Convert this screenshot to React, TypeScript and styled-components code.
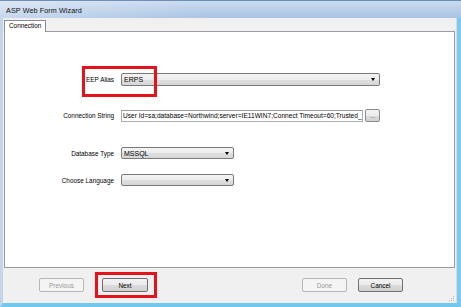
import * as React from 'react'
import styled, { createGlobalStyle } from 'styled-components'

const GlobalStyle = createGlobalStyle`
  html, body {
    margin: 0;
    padding: 0;
    background: #ffffff;
  }
  body {
    font-family: "Liberation Sans", Arial, sans-serif;
  }
`

const Window = styled.div`
  width: 461px;
  height: 307px;
  display: flex;
  flex-direction: column;
  overflow: hidden;
  background: #c4d6ec;
`

const TitleBar = styled.div`
  height: 18px;
  flex: none;
  box-sizing: border-box;
  display: flex;
  align-items: center;
  padding: 2px 0 0 6px;
  border-top: 1px solid #6f8fb4;
  background: linear-gradient(to right, rgba(255, 255, 255, 0.35), rgba(255, 255, 255, 0) 45%),
    linear-gradient(to bottom, #c9daef, #a9c3e4);
`

const Title = styled.span`
  font-size: 7.2px;
  color: #111;
  letter-spacing: 0.1px;
`

const Frame = styled.div`
  flex: 1;
  display: flex;
  min-height: 0;
  border-left: 3px solid #c3d5eb;
  border-right: 4px solid #7cc9ef;
  border-bottom: 4px solid #72c8ef;
`

const Client = styled.div`
  flex: 1;
  display: flex;
  flex-direction: column;
  background: #f0f0f0;
  border-right: 1px solid #dadada;
`

const TabStrip = styled.div`
  height: 13px;
  flex: none;
  display: flex;
  align-items: flex-end;
  padding-left: 1px;
`

const Tab = styled.div`
  position: relative;
  z-index: 1;
  height: 12px;
  box-sizing: border-box;
  margin-bottom: -1px;
  padding: 1px 4px 0 4px;
  border: 1px solid #898c95;
  border-bottom: none;
  background: #ffffff;
  font-size: 6.4px;
  color: #000;
`

const TabPage = styled.div`
  flex: 1;
  margin: 0 1px 0 1px;
  border: 1px solid #9a9ca3;
  background: #ffffff;
`

const Form = styled.div`
  display: flex;
  flex-direction: column;
`

const Row = styled.div<{ $top: number; $h: number }>`
  position: relative;
  margin-top: ${({ $top }) => $top}px;
  height: ${({ $h }) => $h}px;
  display: grid;
  grid-template-columns: 109px auto;
  column-gap: 7px;
  align-items: center;
`

const Label = styled.label`
  text-align: right;
  font-size: 6.4px;
  color: #000;
  white-space: nowrap;
`

const Mark = styled.div`
  position: absolute;
  left: 77px;
  top: -7px;
  width: 75px;
  height: 31px;
  box-sizing: border-box;
  border: 3px solid #e3121b;
  pointer-events: none;
`

const Combo = styled.div<{ $w: number; $h: number }>`
  width: ${({ $w }) => $w}px;
  height: ${({ $h }) => $h}px;
  box-sizing: border-box;
  display: flex;
  align-items: center;
  padding: 0 4px 0 2px;
  border: 1px solid #7a7a7a;
  border-radius: 2px;
  background: linear-gradient(to bottom, #f3f3f3 0%, #ececec 50%, #dfdfdf 51%, #d6d6d6 100%);
  font-size: 7px;
  color: #000;
`

const ComboText = styled.span`
  flex: 1;
`

const Arrow = styled.span`
  width: 0;
  height: 0;
  border-left: 2.5px solid transparent;
  border-right: 2.5px solid transparent;
  border-top: 3px solid #000;
`

const Field = styled.div`
  display: flex;
  align-items: center;
  gap: 2px;
`

const TextBox = styled.div`
  width: 242px;
  height: 12px;
  box-sizing: border-box;
  padding: 0 1px;
  border: 1px solid #abadb3;
  border-top-color: #999;
  background: #fff;
  font-size: 6.6px;
  line-height: 10px;
  color: #000;
  white-space: nowrap;
  overflow: hidden;
`

const Ellipsis = styled.div`
  width: 15px;
  height: 13px;
  box-sizing: border-box;
  border: 1px solid #8a8a8a;
  border-radius: 2px;
  background: linear-gradient(to bottom, #f3f3f3 0%, #ebebeb 50%, #dddddd 51%, #d0d0d0 100%);
  font-size: 6px;
  line-height: 12px;
  text-align: center;
  color: #333;
`

const Footer = styled.div`
  height: 35px;
  flex: none;
  display: flex;
  align-items: flex-start;
  padding: 10px 0 0 36px;
  box-sizing: border-box;
`

const Button = styled.button<{ $gap: number; $w?: number }>`
  width: ${({ $w }) => $w ?? 46}px;
  height: 14px;
  margin: 0 0 0 ${({ $gap }) => $gap}px;
  padding: 0;
  box-sizing: border-box;
  border: 1px solid #707070;
  border-radius: 2px;
  background: linear-gradient(to bottom, #f2f2f2 0%, #ebebeb 50%, #dddddd 51%, #cfcfcf 100%);
  font-family: "Liberation Sans", Arial, sans-serif;
  font-size: 6.4px;
  color: #000;

  &:disabled {
    border-color: #b4b7ba;
    background: #f4f4f4;
    color: #9a9a9a;
  }
`

const Highlight = styled.span<{ $gap: number }>`
  position: relative;
  display: inline-flex;
  margin-left: ${({ $gap }) => $gap}px;

  &::after {
    content: '';
    position: absolute;
    top: -6px;
    bottom: -6px;
    left: -7px;
    right: -9px;
    border: 3px solid #e3121b;
    pointer-events: none;
  }
`

const Grip = styled.svg`
  margin: auto 1px 1px auto;
`

const connection = 'User Id=sa;database=Northwind;server=IE11WIN7;Connect Timeout=60;Trusted_'

export default function App() {
  return (
    <>
      <GlobalStyle />
      <Window>
        <TitleBar>
          <Title>ASP Web Form Wizard</Title>
        </TitleBar>
        <Frame>
          <Client>
            <TabStrip>
              <Tab>Connection</Tab>
            </TabStrip>
            <TabPage>
              <Form>
                <Row $top={41} $h={13}>
                  <Label>EEP Alias</Label>
                  <Combo $w={259} $h={13}>
                    <ComboText>ERPS</ComboText>
                    <Arrow />
                  </Combo>
                  <Mark />
                </Row>
                <Row $top={23} $h={13}>
                  <Label>Connection String</Label>
                  <Field>
                    <TextBox>{connection}</TextBox>
                    <Ellipsis>...</Ellipsis>
                  </Field>
                </Row>
                <Row $top={25} $h={12}>
                  <Label>Database Type</Label>
                  <Combo $w={113} $h={12}>
                    <ComboText>MSSQL</ComboText>
                    <Arrow />
                  </Combo>
                </Row>
                <Row $top={15} $h={12}>
                  <Label>Choose Language</Label>
                  <Combo $w={113} $h={12}>
                    <ComboText />
                    <Arrow />
                  </Combo>
                </Row>
              </Form>
            </TabPage>
            <Footer>
              <Button $gap={0} $w={45} disabled>
                Previous
              </Button>
              <Highlight $gap={18}>
                <Button $gap={0}>Next</Button>
              </Highlight>
              <Button $gap={154} $w={45} disabled>
                Done
              </Button>
              <Button $gap={11} $w={45}>
                Cancel
              </Button>
              <Grip width="6" height="6" viewBox="0 0 6 6">
                <rect x="4" y="0" width="1" height="1" fill="#b8b8b8" />
                <rect x="2" y="2" width="1" height="1" fill="#b8b8b8" />
                <rect x="4" y="2" width="1" height="1" fill="#b8b8b8" />
                <rect x="0" y="4" width="1" height="1" fill="#b8b8b8" />
                <rect x="2" y="4" width="1" height="1" fill="#b8b8b8" />
                <rect x="4" y="4" width="1" height="1" fill="#b8b8b8" />
              </Grip>
            </Footer>
          </Client>
        </Frame>
      </Window>
    </>
  )
}
